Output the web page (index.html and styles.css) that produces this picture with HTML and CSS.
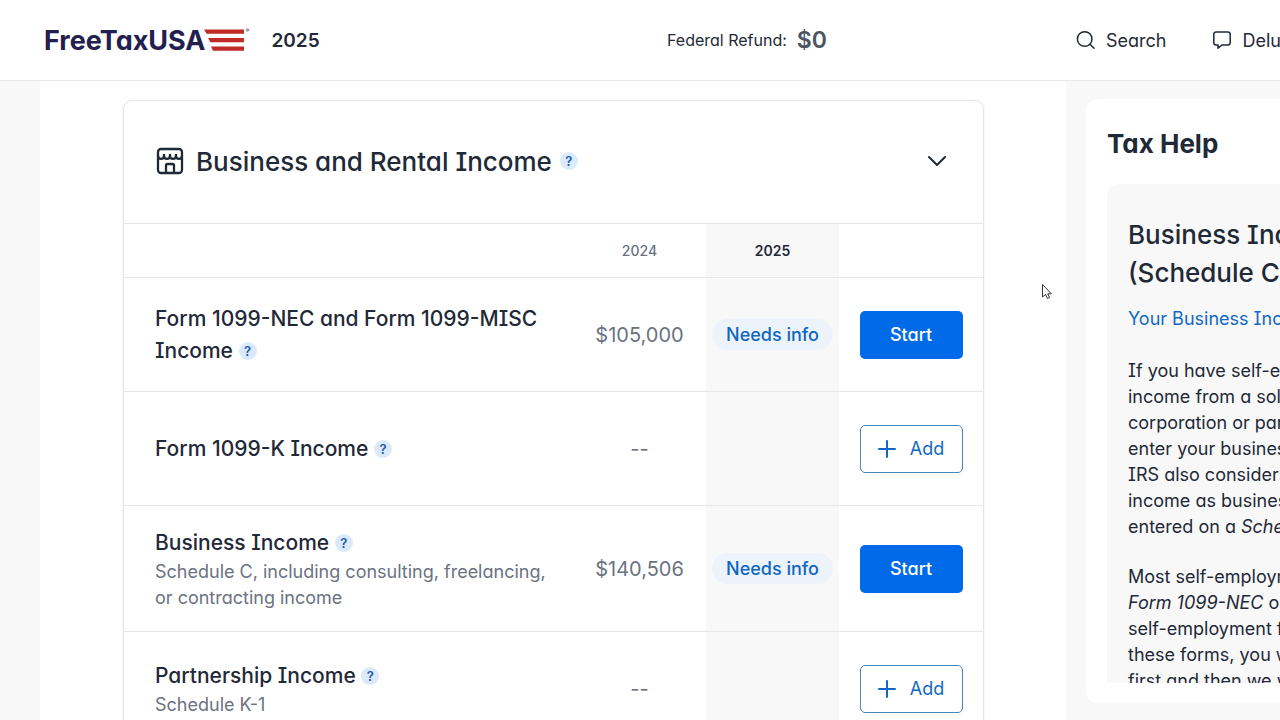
FILE: index.html
```
<!DOCTYPE html>
<html lang="en">

<head>
    <meta charset="UTF-8">
    <meta name="viewport" content="width=device-width, initial-scale=1.0">
    <title>FreeTaxUSA - Business and Rental Income</title>
    <link rel="stylesheet" href="styles.css">
</head>

<body>
    <div class="page">
        <header class="topbar">
            <div class="brand">
                <a href="#" class="logo" aria-label="FreeTaxUSA">
                    <span class="logo-text">FreeTaxUSA</span>
                    <svg class="logo-flag" width="44" height="26" viewBox="0 0 44 26" aria-hidden="true">
                        <path d="M-2 2.500h40v4.200H0.500zM2 11h36v4.200H4.500zM5 19.500h33v4.200H7z" fill="#c02a27" />
                        <circle cx="41.500" cy="3" r="1.300" fill="#b4b5bd" stroke="#77798a" stroke-width="0.700" />
                    </svg>
                </a>
                <span class="tax-year">2025</span>
            </div>
            <div class="refund">
                <span>Federal Refund:</span>
                <strong>$0</strong>
            </div>
            <nav class="tools">
                <a href="#">
                    <svg width="20" height="20" viewBox="0 0 20 20" class="line-icon" aria-hidden="true">
                        <circle cx="8.7" cy="9" r="7.3" />
                        <path d="M14 14.3l4 4" />
                    </svg>
                    Search
                </a>
                <a href="#">
                    <svg width="20" height="20" viewBox="0 0 20 20" class="line-icon" aria-hidden="true">
                        <path d="M4 2h12a2.200 2.200 0 0 1 2.200 2.200v8.600a2.200 2.200 0 0 1-2.200 2.200h-6l-4 3.200v-3.200H4a2.200 2.200 0 0 1-2.200-2.200V4.200A2.200 2.200 0 0 1 4 2z" />
                    </svg>
                    Deluxe Support
                </a>
            </nav>
        </header>

        <div class="layout">
            <main>
                <section class="card">
                    <div class="card-head">
                        <svg width="28" height="28" viewBox="0 0 28 28" class="store-icon" aria-hidden="true">
                            <rect x="2" y="2" width="24" height="24" rx="3" />
                            <path d="M2 8.500c0 4.500 6 4.500 6 0c0 4.500 6 4.500 6 0c0 4.500 6 4.500 6 0c0 4.500 6 4.500 6 0M8 7v2M14 7v2M20 7v2M10 26v-7.500a1.500 1.500 0 0 1 1.500-1.500h5a1.500 1.500 0 0 1 1.500 1.500v7.500" />
                        </svg>
                        <h1>Business and Rental Income</h1>
                        <button class="help" aria-label="Help">?</button>
                        <button class="toggle" aria-label="Collapse section">
                            <svg width="20" height="20" viewBox="0 0 20 20" aria-hidden="true">
                                <path d="M2 6l8 8 8-8" />
                            </svg>
                        </button>
                    </div>

                    <table>
                        <colgroup>
                            <col>
                            <col class="col-year">
                            <col class="col-year">
                            <col class="col-action">
                        </colgroup>
                        <thead>
                            <tr>
                                <td></td>
                                <th scope="col">2024</th>
                                <th scope="col" class="current">2025</th>
                                <td></td>
                            </tr>
                        </thead>
                        <tbody>
                            <tr>
                                <th scope="row">
                                    <span class="name">Form 1099-NEC and Form 1099-MISC Income <button class="help" aria-label="Help">?</button></span>
                                </th>
                                <td>$105,000</td>
                                <td class="current"><span class="badge">Needs info</span></td>
                                <td><button class="btn btn-start">Start</button></td>
                            </tr>
                            <tr>
                                <th scope="row">
                                    <span class="name">Form 1099-K Income <button class="help" aria-label="Help">?</button></span>
                                </th>
                                <td>--</td>
                                <td class="current"></td>
                                <td>
                                    <button class="btn btn-add">
                                        <svg width="18" height="18" viewBox="0 0 18 18" aria-hidden="true"><path d="M9 1v16M1 9h16" /></svg>
                                        Add
                                    </button>
                                </td>
                            </tr>
                            <tr class="with-note">
                                <th scope="row">
                                    <span class="name">Business Income <button class="help" aria-label="Help">?</button></span>
                                    <span class="note">Schedule C, including consulting, freelancing, or contracting income</span>
                                </th>
                                <td>$140,506</td>
                                <td class="current"><span class="badge">Needs info</span></td>
                                <td><button class="btn btn-start">Start</button></td>
                            </tr>
                            <tr>
                                <th scope="row">
                                    <span class="name">Partnership Income <button class="help" aria-label="Help">?</button></span>
                                    <span class="note">Schedule K-1</span>
                                </th>
                                <td>--</td>
                                <td class="current"></td>
                                <td>
                                    <button class="btn btn-add">
                                        <svg width="18" height="18" viewBox="0 0 18 18" aria-hidden="true"><path d="M9 1v16M1 9h16" /></svg>
                                        Add
                                    </button>
                                </td>
                            </tr>
                        </tbody>
                    </table>
                </section>
            </main>

            <aside class="tax-help">
                <h2>Tax Help</h2>
                <div class="article">
                    <h3>Business Income<br>(Schedule C)</h3>
                    <a href="#">Your Business Income</a>
                    <p>If you have self-employment<br>
                        income from a sole proprietor,<br>
                        corporation or partnership,<br>
                        enter your business income. The<br>
                        IRS also considers farm<br>
                        income as business income<br>
                        entered on a <em>Schedule F</em>.</p>
                    <p>Most self-employment is on<br>
                        <em>Form 1099-NEC</em> or other<br>
                        self-employment forms. For<br>
                        these forms, you will enter them<br>
                        first and then we will ask you<br>
                        about your expenses.</p>
                </div>
            </aside>
        </div>
    </div>

    <svg class="cursor" width="12" height="18" viewBox="0 0 12 18" aria-hidden="true">
        <path d="M1.500 1.500v12.500l3-2.500 2 4 2-1-1.800-3.700h3.600z" />
    </svg>
</body>

</html>
```
FILE: styles.css
```
* {
    box-sizing: border-box;
}

body {
    margin: 0;
    height: 100vh;
    overflow: hidden;
    background: #f8f8f8;
    color: #1f2937;
    font-family: Inter, "Liberation Sans", sans-serif;
    font-size: 18px;
    /* serif capital I and single-storey a */
    font-feature-settings: "cv08", "cv11";
}

a {
    color: inherit;
    text-decoration: none;
}

button {
    font: inherit;
    font-feature-settings: inherit;
    cursor: pointer;
}

h1,
h2,
h3,
p {
    margin: 0;
}

/* page is wider than the window, the help column runs off the right */
.page {
    width: calc(100% + 214px);
}

/* Header */
.topbar {
    display: grid;
    grid-template-columns: 1fr auto 1fr;
    align-items: center;
    height: 81px;
    padding: 0 44px;
    background: #fff;
    border-bottom: 1px solid #e8e8e8;
}

.brand,
.logo,
.refund,
.tools,
.tools a {
    display: flex;
    align-items: center;
}

.brand {
    gap: 22px;
}

.logo-text {
    color: #21204f;
    font-size: 27px;
    font-weight: 700;
}

.logo-flag {
    overflow: visible;
}

.tax-year {
    font-size: 19px;
    font-weight: 600;
}

.refund {
    gap: 10px;
    font-size: 16px;
}

.refund strong {
    color: #4b5563;
    font-size: 23px;
    font-weight: 600;
}

.tools {
    justify-self: end;
    gap: 46px;
    width: 374px;
    white-space: nowrap;
}

.tools a {
    gap: 10px;
}

.line-icon {
    fill: none;
    stroke: #1f2937;
    stroke-width: 1.5;
    stroke-linecap: round;
    stroke-linejoin: round;
}

/* Main column */
.layout {
    display: flex;
    align-items: flex-start;
    padding: 0 60px 0 40px;
}

main {
    flex: 1;
    padding: 19px 82px 40px 83px;
    background: #fff;
}

.card {
    border: 1px solid #e3e5e8;
    border-radius: 9px;
    box-shadow: 0 1px 3px rgba(0, 0, 0, 0.08);
    overflow: hidden;
}

.card-head {
    display: flex;
    align-items: center;
    height: 122px;
    padding: 0 36px 2px 32px;
}

.store-icon {
    margin-right: 12px;
    fill: none;
    stroke: #1f2937;
    stroke-width: 2.3;
    stroke-linejoin: round;
}

h1 {
    font-size: 26px;
    font-weight: 500;
}

.help {
    display: inline-flex;
    align-items: center;
    justify-content: center;
    width: 18px;
    height: 18px;
    margin-left: 8px;
    padding: 0;
    border: none;
    border-radius: 50%;
    background: #dbeafb;
    color: #1d58ad;
    font-size: 13px;
    font-weight: 600;
    line-height: 18px;
}

.name .help {
    margin-left: 0;
    vertical-align: 2px;
}

.toggle {
    display: flex;
    margin-left: auto;
    padding: 0;
    border: none;
    background: none;
}

.toggle path {
    fill: none;
    stroke: #1f2937;
    stroke-width: 2;
    stroke-linecap: round;
    stroke-linejoin: round;
}

/* Income table */
table {
    width: 100%;
    table-layout: fixed;
    border-collapse: collapse;
}

.col-year {
    width: 133px;
}

.col-action {
    width: 144px;
}

tr {
    height: 114px;
    border-top: 1px solid #e5e7eb;
}

thead tr {
    height: 54px;
}

.with-note {
    height: 126px;
}

th,
td {
    padding: 0;
    text-align: center;
}

thead th {
    color: #6b7280;
    font-size: 14px;
    font-weight: 500;
}

thead .current {
    color: #1f2937;
    font-weight: 600;
}

tbody th {
    padding: 1px 20px 0 31px;
    text-align: left;
}

tbody td {
    color: #6b7280;
    font-size: 20px;
}

.current {
    background: #f8f8f8;
}

.name {
    display: block;
    font-size: 21px;
    font-weight: 500;
    line-height: 32px;
}

.note {
    display: block;
    color: #6b7280;
    font-weight: 400;
    line-height: 26px;
}

.badge {
    display: inline-block;
    padding: 0 14px;
    border-radius: 16px;
    background: #edf3fb;
    color: #0f66c0;
    font-size: 18px;
    font-weight: 500;
    line-height: 31px;
    white-space: nowrap;
}

.btn {
    display: inline-flex;
    align-items: center;
    justify-content: center;
    gap: 14px;
    width: 103px;
    height: 48px;
    padding: 0;
    border-radius: 5px;
    font-size: 18px;
    vertical-align: middle;
}

.btn-start {
    border: none;
    background: #006ae8;
    color: #fff;
    font-weight: 500;
}

.btn-add {
    border: 1px solid #4a86b8;
    background: #fff;
    color: #1168c4;
}

.btn-add path {
    fill: none;
    stroke: #1168c4;
    stroke-width: 2;
    stroke-linecap: round;
}

/* Help column */
.tax-help {
    display: flex;
    flex-direction: column;
    flex: 0 0 348px;
    min-width: 0;
    height: calc(100vh - 116px);
    margin: 18px 0 0 20px;
    padding: 20px 21px;
    border-radius: 12px;
    background: #fff;
}

h2 {
    margin-bottom: 15px;
    font-size: 26px;
    font-weight: 700;
    line-height: 50px;
}

.article {
    flex: 1;
    min-height: 0;
    padding: 32px 21px;
    border-radius: 12px 12px 0 0;
    background: #f8f8f8;
    line-height: 26px;
    white-space: nowrap;
    overflow: hidden;
}

h3 {
    margin-bottom: 14px;
    font-size: 26px;
    font-weight: 500;
    line-height: 38px;
}

.article a {
    color: #1168c4;
}

.article p {
    margin-top: 26px;
}

.article p + p {
    margin-top: 24px;
}

.cursor {
    position: absolute;
    top: 283px;
    left: 1041px;
}

.cursor path {
    fill: #fff;
    stroke: #333;
}
```
